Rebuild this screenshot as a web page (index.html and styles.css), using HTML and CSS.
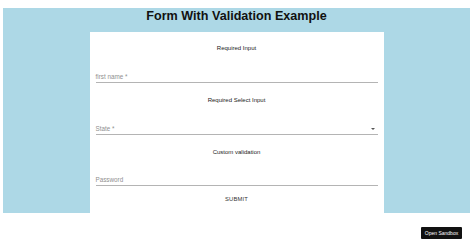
FILE: index.html
```html
<!DOCTYPE html>
<html>
<head>
<meta charset="utf-8">
<link rel="stylesheet" href="styles.css">
</head>
<body>
<div class="page">
  <h1 class="title">Form With Validation Example</h1>
  <form class="card">
    <div class="label">Required Input</div>
    <div class="field"><span class="ph">first name *</span></div>
    <div class="label">Required Select Input</div>
    <div class="field select"><span class="ph">State *</span><span class="arrow"></span></div>
    <div class="label">Custom validation</div>
    <div class="field field-last"><span class="ph">Password</span></div>
    <div class="submit">SUBMIT</div>
  </form>
</div>
<div class="sandbox">Open Sandbox</div>
</body>
</html>
```
FILE: styles.css
```css
html, body {
  margin: 0;
  padding: 0;
  background: #fff;
  font-family: "Liberation Sans", Arial, sans-serif;
}
.page {
  margin: 8px 4px 0 3px;
  width: 467px;
  height: 205px;
  background: #add8e6;
  overflow: hidden;
  display: flex;
  flex-direction: column;
  align-items: center;
}
.title {
  margin: 0;
  font-size: 12.6px;
  line-height: 16px;
  font-weight: bold;
  color: #111;
}
.card {
  margin-top: 8px;
  width: 282px;
  padding: 11px 6px 20px 6px;
  background: #fff;
  display: flex;
  flex-direction: column;
  flex: 1;
}
.label {
  font-size: 6px;
  line-height: 10px;
  color: #222;
  text-align: center;
}
.field {
  padding-top: 19px;
  line-height: 10px;
  height: 10px;
  border-bottom: 1px solid #b4b4b4;
  margin-bottom: 12px;
  display: flex;
  align-items: center;
  justify-content: space-between;
}
.field-last {
  padding-top: 18px;
  margin-bottom: 8px;
}
.ph {
  font-size: 6.3px;
  color: #8f8f8f;
}
.arrow {
  width: 0;
  height: 0;
  border-left: 2px solid transparent;
  border-right: 2px solid transparent;
  border-top: 2px solid #555;
  margin-right: 3px;
}
.submit {
  font-size: 5.8px;
  line-height: 10px;
  color: #333;
  text-align: center;
  letter-spacing: 0.2px;
}
.sandbox {
  position: absolute;
  left: 421px;
  top: 227px;
  width: 41px;
  height: 12px;
  background: #111;
  color: #fff;
  font-size: 5px;
  line-height: 12px;
  text-align: center;
  border-radius: 1px;
}
```
